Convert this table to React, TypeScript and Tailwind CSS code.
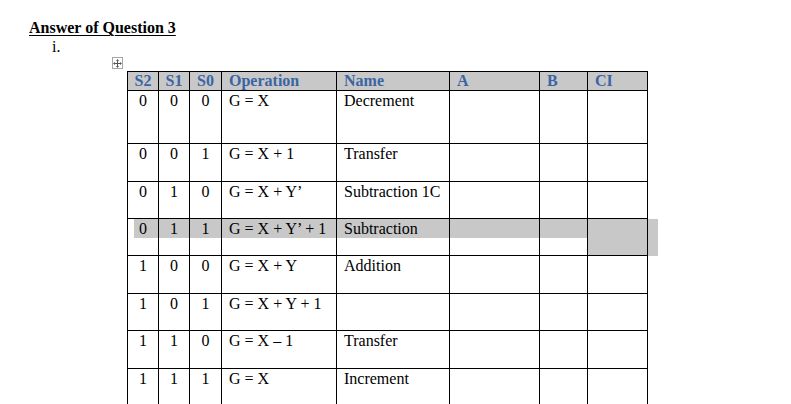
const rows = [
  { s: ["0", "0", "0"], op: "G = X", name: "Decrement", h: "h-[53px]" },
  { s: ["0", "0", "1"], op: "G = X + 1", name: "Transfer", h: "h-[38px]" },
  { s: ["0", "1", "0"], op: "G = X + Y’", name: "Subtraction 1C", h: "h-[37px]" },
  { s: ["0", "1", "1"], op: "G = X + Y’ + 1", name: "Subtraction", h: "h-[37px]", shade: true },
  { s: ["1", "0", "0"], op: "G = X + Y", name: "Addition", h: "h-[38px]" },
  { s: ["1", "0", "1"], op: "G = X + Y + 1", name: "", h: "h-[37px]" },
  { s: ["1", "1", "0"], op: "G = X – 1", name: "Transfer", h: "h-[38px]" },
  { s: ["1", "1", "1"], op: "G = X", name: "Increment", h: "h-[37px]" },
];

const headers = ["S2", "S1", "S0", "Operation", "Name", "A", "B", "CI"];
const cell = "border border-black p-0 align-top";

function MoveHandle() {
  return (
    <div className="ml-[112px] mt-[1px] flex h-[12px] w-[11px] items-center justify-center border border-[#a6a6a6] bg-white">
      <svg width="9" height="9" viewBox="0 0 9 9" fill="#555">
        <rect x="4" y="1" width="1" height="7" />
        <rect x="1" y="4" width="7" height="1" />
        <polygon points="4.5,0 3,2 6,2" />
        <polygon points="4.5,9 3,7 6,7" />
        <polygon points="0,4.5 2,3 2,6" />
        <polygon points="9,4.5 7,3 7,6" />
      </svg>
    </div>
  );
}

export default function App() {
  return (
    <div className="h-[404px] w-[791px] overflow-hidden bg-white text-[16px] text-black font-['Liberation_Serif','Times_New_Roman',serif]">
      <div className="flex flex-col pt-[18px] leading-[19px]">
        <div className="pl-[29px] font-bold underline underline-offset-[2px]">Answer of Question 3</div>
        <div className="pl-[52px]">i.</div>
        <MoveHandle />
        <table className="ml-[127px] mt-[2px] w-[520px] table-fixed border-collapse leading-[18px]">
          <colgroup>
            <col className="w-[31px]" />
            <col className="w-[31px]" />
            <col className="w-[32px]" />
            <col className="w-[115px]" />
            <col className="w-[113px]" />
            <col className="w-[90px]" />
            <col className="w-[48px]" />
            <col className="w-[60px]" />
          </colgroup>
          <thead>
            <tr>
              {headers.map((h, i) => (
                <th
                  key={h}
                  className={`${cell} h-[19px] bg-[#c8c8c8] font-bold text-[#3b65a2] ${
                    i < 3 ? "text-center" : "pl-[7px] text-left"
                  }`}
                >
                  {h}
                </th>
              ))}
            </tr>
          </thead>
          <tbody>
            {rows.map((r, ri) => {
              const band = r.shade ? "bg-[#c8c8c8]" : "";
              return (
                <tr key={ri}>
                  {r.s.map((v, i) => (
                    <td key={i} className={`${cell} ${r.h}`}>
                      <div className={`pt-[1px] text-center ${band} ${i === 0 ? "ml-[6px] pr-[6px]" : ""}`}>
                        {v}
                      </div>
                    </td>
                  ))}
                  <td className={`${cell} ${r.h}`}>
                    <div className={`pl-[7px] pt-[1px] whitespace-nowrap ${band}`}>{r.op}</div>
                  </td>
                  <td className={`${cell} ${r.h}`}>
                    <div className={`pl-[7px] pt-[1px] whitespace-nowrap ${band}`}>{r.name || "\u00a0"}</div>
                  </td>
                  <td className={`${cell} ${r.h}`}>
                    <div className={`pt-[1px] ${band}`}>{"\u00a0"}</div>
                  </td>
                  <td className={`${cell} ${r.h}`}>
                    <div className={`pt-[1px] ${band}`}>{"\u00a0"}</div>
                  </td>
                  <td
                    className={`${cell} ${r.h} ${
                      r.shade ? "bg-[#c8c8c8] shadow-[10px_0_0_0_#c8c8c8]" : ""
                    }`}
                  />
                </tr>
              );
            })}
          </tbody>
        </table>
      </div>
    </div>
  );
}
